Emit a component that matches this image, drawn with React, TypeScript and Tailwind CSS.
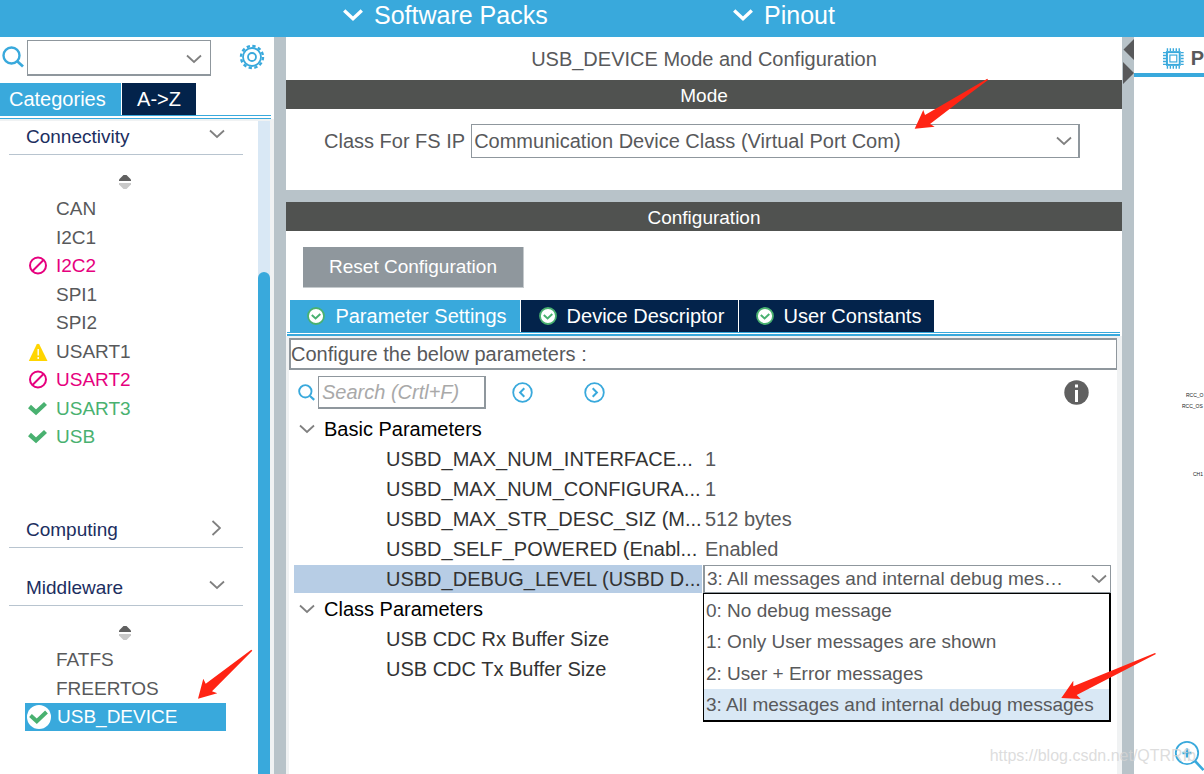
import { useState } from "react";
import type { ReactNode } from "react";

const peripherals = [
  { name: "CAN", status: "none" },
  { name: "I2C1", status: "none" },
  { name: "I2C2", status: "blocked" },
  { name: "SPI1", status: "none" },
  { name: "SPI2", status: "none" },
  { name: "USART1", status: "warning" },
  { name: "USART2", status: "blocked" },
  { name: "USART3", status: "ok" },
  { name: "USB", status: "ok" },
];

const basicParams = [
  { name: "USBD_MAX_NUM_INTERFACE...", value: "1" },
  { name: "USBD_MAX_NUM_CONFIGURA...", value: "1" },
  { name: "USBD_MAX_STR_DESC_SIZ (M...", value: "512 bytes" },
  { name: "USBD_SELF_POWERED (Enabl...", value: "Enabled" },
];

const debugLevels = [
  "0: No debug message",
  "1: Only User messages are shown",
  "2: User + Error messages",
  "3: All messages and internal debug messages",
];

const statusColor: Record<string, string> = {
  none: "text-[#58595b]",
  warning: "text-[#58595b]",
  blocked: "text-[#e6007e]",
  ok: "text-[#49b170]",
};

function Chevron({ className = "" }: { className?: string }) {
  return (
    <svg className={className} width="16" height="10" viewBox="0 0 16 10" fill="none" aria-hidden="true">
      <path d="M1 1.5 8 8l7-6.5" stroke="#808080" strokeWidth="1.8" />
    </svg>
  );
}

function MenuChevron() {
  return (
    <svg width="20" height="13" viewBox="0 0 20 13" fill="none" aria-hidden="true">
      <path d="m1.2 1.5 8.8 8.2 8.8-8.2" stroke="#fff" strokeWidth="3.4" />
    </svg>
  );
}

function SearchIcon({ size }: { size: number }) {
  return (
    <svg width={size} height={size} viewBox="0 0 22 22" fill="none" stroke="#39a9dc" aria-hidden="true">
      <circle cx="9.5" cy="9.5" r="8" strokeWidth="2.4" />
      <path d="m15.5 15.5 5.5 5" strokeWidth="2.8" />
    </svg>
  );
}

function GearIcon() {
  return (
    <svg width="26" height="26" viewBox="-13 -13 26 26" fill="none" stroke="#39a9dc" aria-hidden="true">
      <circle r="11" strokeWidth="2.4" strokeDasharray="3.3 2.46" />
      <circle r="9" strokeWidth="1.8" />
      <circle r="4" strokeWidth="1.8" />
    </svg>
  );
}

function ScrollArrows() {
  return (
    <svg width="14" height="16" viewBox="0 0 14 16" aria-hidden="true">
      <path d="M1 7V5.500L5.500 1h3L13 5.500V7z" fill="#606060" />
      <path d="M1 9v1.500L5.500 15h3l4.500-4.500V9z" fill="#c9c9c9" />
    </svg>
  );
}

function StatusIcon({ status }: { status: string }) {
  if (status === "blocked") {
    return (
      <svg width="20" height="20" viewBox="0 0 20 20" fill="none" stroke="#e6007e" aria-hidden="true">
        <circle cx="10" cy="9.5" r="8" strokeWidth="2" />
        <path d="M4.500 15 15.500 4" strokeWidth="2" />
      </svg>
    );
  }
  if (status === "warning") {
    return (
      <svg width="20" height="20" viewBox="0 0 20 20" aria-hidden="true">
        <path d="M8.600 2.500Q10 .8 11.400 2.500L19.500 19H.8z" fill="#ffd500" />
        <path d="M10.200 7v6.500M10.200 15v2" stroke="#fff" strokeWidth="1.400" />
      </svg>
    );
  }
  if (status === "ok") {
    return (
      <svg width="20" height="20" viewBox="0 0 20 20" fill="none" aria-hidden="true">
        <path d="m1.500 7.500 6.500 5.800L17.500 4.500" stroke="#49b170" strokeWidth="4.400" />
      </svg>
    );
  }
  return <span className="w-5" />;
}

function TabCheck() {
  return (
    <svg width="18" height="18" viewBox="0 0 18 18" fill="none" aria-hidden="true">
      <circle cx="9" cy="9" r="8" fill="#fff" stroke="#49b170" strokeWidth="1.8" />
      <path d="m4.800 8 3.800 3.400L13.300 7" stroke="#49b170" strokeWidth="2" />
    </svg>
  );
}

function CategoryHeader({ title, open = false }: { title: string; open?: boolean }) {
  return (
    <button
      type="button"
      aria-expanded={open}
      className="ml-[9px] flex h-[34px] w-[234px] items-start justify-between border-b border-[#b8c4cf] pl-[17px] pr-[18px] pt-1 text-left text-[#1c2e5f]"
    >
      <span>{title}</span>
      {open ? (
        <Chevron className="mt-1" />
      ) : (
        <svg className="mr-1 mt-0.5" width="10" height="16" viewBox="0 0 10 16" fill="none" aria-hidden="true">
          <path d="M1.500 1 9 8l-7.500 7" stroke="#808080" strokeWidth="1.800" />
        </svg>
      )}
    </button>
  );
}

function RedArrow({ className, width, height, points }: { className: string; width: number; height: number; points: string }) {
  return (
    <svg
      className={`pointer-events-none absolute z-20 ${className}`}
      width={width}
      height={height}
      viewBox={`0 0 ${width} ${height}`}
      aria-hidden="true"
    >
      <polygon points={points} fill="#ff2414" />
    </svg>
  );
}

function Sidebar() {
  return (
    <aside className="flex w-[274px] shrink-0 flex-col text-[19px] leading-6">
      <div className="flex h-[46px] items-start pt-[3px]">
        <div className="w-[27px] pl-0.5 pt-1.5">
          <SearchIcon size={22} />
        </div>
        <div className="relative w-[184px]">
          <select
            aria-label="Search peripheral"
            className="h-9 w-full appearance-none border border-b-2 border-[#8f979d] bg-white"
          />
          <Chevron className="pointer-events-none absolute right-[9px] top-[14px]" />
        </div>
        <button type="button" aria-label="Settings" className="ml-7 pt-1">
          <GearIcon />
        </button>
      </div>
      <div className="flex h-8 gap-px text-xl text-white">
        <button type="button" className="w-[121px] bg-[#39a9dc] pl-[9px] text-left">
          Categories
        </button>
        <button type="button" className="w-[74px] bg-[#03234b]">
          A-&gt;Z
        </button>
      </div>
      <div className="mr-[3px] h-1 border-y border-[#39a9dc]" />
      <div className="flex flex-1 border-t-2 border-[#f0f2f3]">
        <nav className="relative w-[258px]">
          <CategoryHeader title="Connectivity" open />
          <div className="flex h-10 items-end justify-center pb-[5px] pr-2">
            <ScrollArrows />
          </div>
          <ul className="flex h-64 flex-col justify-between">
            {peripherals.map((p) => (
              <li key={p.name}>
                <a href="#" className={`flex h-7 items-center gap-2 pl-7 ${statusColor[p.status]}`}>
                  <StatusIcon status={p.status} />
                  {p.name}
                </a>
              </li>
            ))}
          </ul>
          <div className="flex flex-col items-start gap-6 pt-[63px]">
            <CategoryHeader title="Computing" />
            <CategoryHeader title="Middleware" open />
          </div>
          <div className="flex h-10 items-end justify-center pb-[5px] pr-2">
            <ScrollArrows />
          </div>
          <ul className="flex h-[85px] flex-col justify-between text-[#58595b]">
            <li>
              <a href="#" className="flex h-7 items-center pl-14">FATFS</a>
            </li>
            <li>
              <a href="#" className="flex h-7 items-center pl-14">FREERTOS</a>
            </li>
            <li>
              <a href="#" className="ml-[25px] flex h-7 w-[201px] items-center gap-1.5 bg-[#39a9dc] pl-0.5 text-white">
                <svg width="24" height="24" viewBox="0 0 24 24" fill="none" aria-hidden="true">
                  <circle cx="12" cy="12" r="12" fill="#fff" />
                  <path d="m3.500 10.500 6.300 5.800L19.500 7" stroke="#49b170" strokeWidth="4" />
                </svg>
                USB_DEVICE
              </a>
            </li>
          </ul>
          <RedArrow
            className="bottom-[75px] right-1"
            width={56}
            height={50}
            points="0,49.7 5.3,29.7 7.7,34.7 53.3,0.7 54.3,1.7 14,42.3 19.3,44.3"
          />
        </nav>
        <div className="w-3 bg-[#d9e8f5] pt-[151px]">
          <div className="h-full rounded-t-full bg-[#39a9dc]" />
        </div>
        <div className="w-1 bg-[#f0f2f3]" />
      </div>
    </aside>
  );
}

function SectionBar({ children }: { children: ReactNode }) {
  return (
    <h2 className="flex h-[29px] items-center justify-center bg-[#505250] pt-0.5 text-[19px] text-white">{children}</h2>
  );
}

function ModePanel() {
  return (
    <section className="relative bg-white pb-8">
      <h1 className="flex h-[43px] items-center justify-center pt-px text-[#58595b]">
        USB_DEVICE Mode and Configuration
      </h1>
      <SectionBar>Mode</SectionBar>
      <div className="mt-[15px] flex items-center gap-1.5 pl-[38px] pr-[42px] text-[#58595b]">
        <label htmlFor="fs-class" className="shrink-0">Class For FS IP</label>
        <div className="relative flex-1">
          <select
            id="fs-class"
            className="block h-[34px] w-full appearance-none border border-r-2 border-[#8f979d] bg-white pl-0.5"
          >
            <option>Communication Device Class (Virtual Port Com)</option>
          </select>
          <Chevron className="pointer-events-none absolute right-2 top-3" />
        </div>
      </div>
      <RedArrow
        className="right-[133px] top-[41px]"
        width={75}
        height={52}
        points="0.7,50.7 9.3,32 11,37 73.3,0.7 74,2 46,23 16,46 20.7,48.7"
      />
    </section>
  );
}

const tabs = [
  { label: "Parameter Settings", style: "w-[230px] bg-[#39a9dc]" },
  { label: "Device Descriptor", style: "w-[217px] bg-[#03234b]" },
  { label: "User Constants", style: "w-[195px] bg-[#03234b]" },
];

function GroupRow({ title }: { title: string }) {
  return (
    <tr>
      <th colSpan={2} className="p-0 pb-0.5 text-left font-normal">
        <button type="button" aria-expanded="true" className="flex h-7 items-center gap-[9px] pl-[5px] text-black">
          <Chevron />
          {title}
        </button>
      </th>
    </tr>
  );
}

function ParamRow({ name, value = "" }: { name: string; value?: string }) {
  return (
    <tr>
      <td className="p-0 pb-0.5">
        <div className="flex h-7 items-center pl-[92px] text-[#333]">{name}</div>
      </td>
      <td className="p-0 pb-0.5 pl-0.5 text-[#58595b]">{value}</td>
    </tr>
  );
}

function DebugLevelSelect() {
  const [level, setLevel] = useState(debugLevels[3]);

  return (
    <div className="relative mr-1.5 text-[19px] text-[#58595b]">
      <select
        aria-label="USBD_DEBUG_LEVEL"
        value={level}
        onChange={(e) => setLevel(e.target.value)}
        className="block h-7 w-full appearance-none overflow-hidden text-ellipsis border border-l-2 border-[#8f979d] bg-white pl-0.5 pr-[38px]"
      >
        {debugLevels.map((l) => (
          <option key={l}>{l}</option>
        ))}
      </select>
      <Chevron className="pointer-events-none absolute right-1 top-[9px]" />
      <div
        role="listbox"
        aria-label="Debug levels"
        className="absolute inset-x-0 top-7 z-10 flex h-[129px] flex-col border border-b-2 border-r-2 border-black bg-white"
      >
        {debugLevels.map((l) => (
          <button
            key={l}
            type="button"
            role="option"
            aria-selected={l === level}
            onClick={() => setLevel(l)}
            className={`flex-1 whitespace-nowrap pl-0.5 pt-0.5 text-left ${l === level ? "bg-[#d9e8f5]" : ""}`}
          >
            {l}
          </button>
        ))}
      </div>
    </div>
  );
}

function ConfigurationPanel() {
  return (
    <section className="flex flex-1 flex-col bg-white">
      <SectionBar>Configuration</SectionBar>
      <button
        type="button"
        className="ml-[17px] mt-4 h-[41px] w-[221px] border-b border-r border-[#c5cacd] bg-[#8f979d] text-[19px] text-white"
      >
        Reset Configuration
      </button>
      <div className="ml-1 mt-3 flex h-8 gap-px text-white">
        {tabs.map((t) => (
          <button key={t.label} type="button" className={`flex items-center justify-center gap-2.5 pl-1 ${t.style}`}>
            <TabCheck />
            {t.label}
          </button>
        ))}
      </div>
      <div className="ml-px mr-0.5 h-1 border-b-2 border-t border-[#39a9dc]" />
      <div className="flex-1 border-l-3 border-r-5 border-t-2 border-[#f0f2f3]">
        <p className="flex h-8 items-center border-2 border-r border-[#8f979d] text-[#58595b]">
          Configure the below parameters :
        </p>
        <div className="flex h-[45px] items-center pl-[9px] pr-7">
          <SearchIcon size={17} />
          <input
            type="text"
            aria-label="Search parameters"
            placeholder="Search (Crtl+F)"
            className="ml-[3px] h-[33px] w-[168px] border border-b-2 border-r-2 border-[#8f979d] pl-[3px] italic placeholder:text-[#a9a9a9]"
          />
          <button type="button" aria-label="Previous match" className="ml-[26px]">
            <svg width="21" height="21" viewBox="0 0 21 21" fill="none" stroke="#39a9dc" aria-hidden="true">
              <circle cx="10.5" cy="10.5" r="9.3" strokeWidth="1.8" />
              <path d="m12.300 6.300-4.200 4.200 4.200 4.200" strokeWidth="2" />
            </svg>
          </button>
          <button type="button" aria-label="Next match" className="ml-[51px]">
            <svg width="21" height="21" viewBox="0 0 21 21" fill="none" stroke="#39a9dc" aria-hidden="true">
              <circle cx="10.5" cy="10.5" r="9.3" strokeWidth="1.8" />
              <path d="m8.700 6.300 4.200 4.200-4.200 4.200" strokeWidth="2" />
            </svg>
          </button>
          <button type="button" aria-label="Information" className="ml-auto">
            <svg width="25" height="25" viewBox="0 0 25 25" aria-hidden="true">
              <circle cx="12.5" cy="12.5" r="12.2" fill="#606060" />
              <path d="M11 10h3v12h-3zM11 4.500h3v3h-3z" fill="#fff" />
            </svg>
          </button>
        </div>
        <table className="ml-[5px] w-[calc(100%-5px)] table-fixed border-collapse whitespace-nowrap">
          <colgroup>
            <col className="w-[409px]" />
            <col />
          </colgroup>
          <tbody>
            <GroupRow title="Basic Parameters" />
            {basicParams.map((p) => (
              <ParamRow key={p.name} name={p.name} value={p.value} />
            ))}
            <tr>
              <td className="p-0 pb-0.5 pr-px">
                <div className="flex h-7 items-center bg-[#b7cde5] pl-[92px] text-[#333]">
                  USBD_DEBUG_LEVEL (USBD D...
                </div>
              </td>
              <td className="p-0 pb-0.5">
                <DebugLevelSelect />
              </td>
            </tr>
            <GroupRow title="Class Parameters" />
            <ParamRow name="USB CDC Rx Buffer Size" />
            <ParamRow name="USB CDC Tx Buffer Size" />
          </tbody>
        </table>
      </div>
    </section>
  );
}

function ChipIcon() {
  return (
    <svg width="21" height="21" viewBox="0 0 21 21" fill="none" stroke="#39a9dc" aria-hidden="true">
      <rect x="4" y="4" width="13" height="13" strokeWidth="2" />
      <rect x="7" y="7" width="7" height="7" strokeWidth="1.2" />
      <path
        d="M4.500 0v3m3-3v3m3-3v3m3-3v3m3-3v3M4.500 18v3m3-3v3m3-3v3m3-3v3m3-3v3M0 4.500h3m-3 3h3m-3 3h3m-3 3h3m-3 3h3M18 4.500h3m-3 3h3m-3 3h3m-3 3h3m-3 3h3"
        strokeWidth="1.400"
      />
    </svg>
  );
}

function PinoutPanel() {
  return (
    <aside className="relative w-[70px] shrink-0 overflow-hidden bg-white">
      <button
        type="button"
        className="flex h-10 w-full items-center gap-[7px] border-b-4 border-[#39a9dc] pl-[29px] pt-1.5 font-bold text-[#58595b]"
      >
        <ChipIcon />P
      </button>
      {/* pin labels of the chip view */}
      <div className="text-[5px] leading-[8px] text-[#222]">
        <span className="absolute left-[52px] top-[354px]">RCC_O</span>
        <span className="absolute left-12 top-[365px]">RCC_OS</span>
        <span className="absolute left-[59px] top-[433px]">CH1</span>
      </div>
      <button type="button" aria-label="Zoom in" className="absolute bottom-[3px] left-10">
        <svg width="30" height="31" viewBox="0 0 30 31" fill="none" stroke="#39a9dc" aria-hidden="true">
          <circle cx="13" cy="13" r="11.200" strokeWidth="1.800" />
          <path d="M13 8.500v9M8.500 13h9" strokeWidth="2.400" />
          <path d="m21 21 8.500 9" strokeWidth="2.600" />
        </svg>
      </button>
    </aside>
  );
}

export default function App() {
  return (
    <div className="relative flex min-h-screen flex-col overflow-hidden bg-white font-['Liberation_Sans',Arial,sans-serif] text-xl leading-6">
      <header className="flex h-[37px] items-start bg-[#39a9dc] pl-[343px] text-[25px] leading-[30px] text-white">
        <button type="button" className="flex w-[390px] items-center gap-[11px]">
          <MenuChevron />
          Software Packs
        </button>
        <button type="button" className="flex items-center gap-[11px]">
          <MenuChevron />
          Pinout
        </button>
      </header>
      <div className="flex flex-1">
        <Sidebar />
        <div className="w-3 shrink-0 bg-[#b8c3c9]" />
        <main className="flex min-w-0 flex-1 flex-col gap-3 bg-[#b8c3c9]">
          <ModePanel />
          <ConfigurationPanel />
        </main>
        <div className="w-3 shrink-0 bg-[#b8c3c9] pt-0.5">
          <svg width="12" height="46" viewBox="0 0 12 46" fill="#58595b" aria-hidden="true">
            <path d="M12 0v21L1.500 10.500zM1 23v22l11-11z" />
          </svg>
        </div>
        <PinoutPanel />
      </div>
      <RedArrow
        className="bottom-[74px] right-[47px]"
        width={96}
        height={48}
        points="0.3,46 12.3,28.700 12.3,34.300 94,1 95,2 15.700,43 19.700,47"
      />
      <span className="pointer-events-none absolute bottom-2 right-2 z-20 text-base leading-5 text-[#d4d4d4]/80">
        https://blog.csdn.net/QTRRfb
      </span>
    </div>
  );
}
